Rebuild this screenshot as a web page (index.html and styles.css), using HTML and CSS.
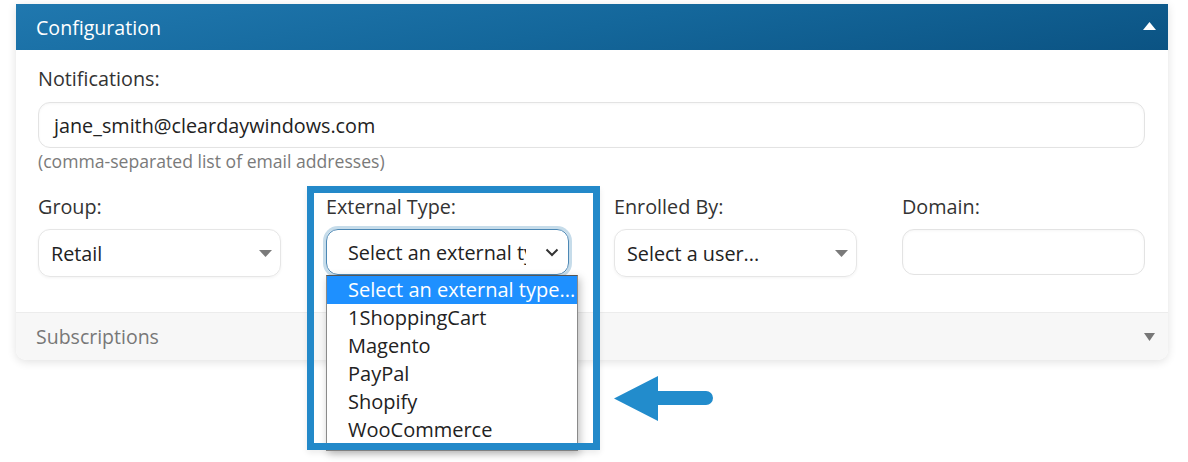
FILE: index.html
```html
<!DOCTYPE html>
<html lang="en">
<head>
  <meta charset="UTF-8" />
  <title>Configuration</title>
  <link rel="stylesheet" href="styles.css">
</head>
<body>
  <div class="panel">
    <div class="panel-head">
      <span>Configuration</span>
      <svg class="caret-up" width="13" height="8" viewBox="0 0 13 8"><polygon points="0,8 6.5,0 13,8" fill="#fff"/></svg>
    </div>

    <div class="panel-body">
      <label class="field-label">Notifications:</label>
      <div class="text-input">jane_smith@cleardaywindows.com</div>
      <div class="hint">(comma-separated list of email addresses)</div>

      <div class="field-row">
        <div class="field">
          <label class="field-label">Group:</label>
          <div class="select-box">
            <span class="select-text">Retail</span>
            <svg width="13" height="7" viewBox="0 0 13 7"><polygon points="0,0 13,0 6.5,7" fill="#7a7a7a"/></svg>
          </div>
        </div>

        <div class="field">
          <label class="field-label">External Type:</label>
          <div class="native-select">
            <span class="select-text">Select an external type...</span>
            <svg width="14" height="9" viewBox="0 0 14 9"><polyline points="1.5,1.5 7,7 12.5,1.5" fill="none" stroke="#333" stroke-width="2"/></svg>
            <ul class="options">
              <li class="active">Select an external type...</li>
              <li>1ShoppingCart</li>
              <li>Magento</li>
              <li>PayPal</li>
              <li>Shopify</li>
              <li>WooCommerce</li>
            </ul>
          </div>
        </div>

        <div class="field">
          <label class="field-label">Enrolled By:</label>
          <div class="select-box">
            <span class="select-text">Select a user...</span>
            <svg width="13" height="7" viewBox="0 0 13 7"><polygon points="0,0 13,0 6.5,7" fill="#7a7a7a"/></svg>
          </div>
        </div>

        <div class="field">
          <label class="field-label">Domain:</label>
          <div class="text-input"></div>
        </div>
      </div>
    </div>

    <div class="panel-foot">
      <span>Subscriptions</span>
      <svg width="11" height="8" viewBox="0 0 11 8"><polygon points="0,0 11,0 5.5,8" fill="#777"/></svg>
    </div>
  </div>

  <div class="highlight-frame"></div>
  <svg class="pointer" width="100" height="46" viewBox="0 0 100 46">
    <path d="M0,22.5 L44,0 L44,15 L92,15 A7,7 0 0 1 92,29 L44,29 L44,45 Z" fill="#228ccc"/>
  </svg>
</body>
</html>
```

FILE: styles.css
```css
html {
  background: #fff;
}

body {
  font-family: 'Open Sans', sans-serif;
  background: #fff;
  margin: 0;
  padding: 4px 20px 0 16px;
  min-height: 462px;
  box-sizing: border-box;
  position: relative;
  color: #333;
}

.panel {
  width: 1152px;
  border-radius: 0 0 10px 10px;
  box-shadow: 0 2px 10px rgba(0,0,0,0.12);
  background: #fff;
}

.panel-head {
  height: 46px;
  padding: 0 12px 0 20px;
  display: flex;
  align-items: center;
  justify-content: space-between;
  background: linear-gradient(170deg, #2078af 0%, #14679b 50%, #0b5383 100%);
  color: #fff;
  font-size: 19.6px;
}

.caret-up {
  margin-top: -2px;
}

.panel-body {
  padding: 16px 23px 35px 22px;
}

.field-label {
  display: block;
  font-size: 19.8px;
  line-height: 26px;
  margin-bottom: 10px;
  color: #333;
}

.text-input {
  height: 46px;
  box-sizing: border-box;
  border: 1px solid #e3e3e3;
  border-radius: 12px;
  padding: 0 15px;
  display: flex;
  align-items: center;
  font-size: 19.8px;
  color: #222;
  box-shadow: inset 0 1px 3px rgba(0,0,0,0.04);
}

.hint {
  font-size: 17.6px;
  line-height: 22px;
  margin-top: 2px;
  color: #7a7a7a;
}

.field-row {
  display: grid;
  grid-template-columns: repeat(4, 243px);
  column-gap: 45px;
  margin-top: 22px;
}

.field .field-label {
  margin-bottom: 9px;
}

.select-box {
  height: 48px;
  box-sizing: border-box;
  border: 1px solid #e6e6e6;
  border-radius: 12px;
  padding: 0 8px 0 12px;
  display: flex;
  align-items: center;
  justify-content: space-between;
  font-size: 19.8px;
  color: #222;
  box-shadow: 0 1px 3px rgba(0,0,0,0.05);
}

.native-select {
  position: relative;
  height: 46px;
  box-sizing: border-box;
  border: 1px solid #4d88b5;
  border-radius: 12px;
  padding: 0 9px 0 21px;
  display: flex;
  align-items: center;
  justify-content: space-between;
  font-size: 19.8px;
  color: #222;
  box-shadow: 0 0 0 3px #c6dcea;
}

.native-select .select-text {
  width: 178px;
  overflow: hidden;
  white-space: nowrap;
}

.options {
  position: absolute;
  left: -1px;
  top: 45px;
  width: 252px;
  height: 176px;
  margin: 0;
  padding: 0;
  list-style: none;
  box-sizing: border-box;
  background: #fff;
  border: 1px solid #8a8a8a;
  border-top-color: #555;
  box-shadow: 2px 3px 8px rgba(0,0,0,0.25);
  overflow: hidden;
  z-index: 2;
}

.options li {
  height: 28px;
  line-height: 28px;
  padding-left: 21px;
  font-size: 20px;
  color: #222;
  white-space: nowrap;
}

.options li.active {
  background: #1e90ff;
  color: #fff;
}

.panel-foot {
  height: 48px;
  box-sizing: border-box;
  border-top: 1px solid #ececec;
  background: #f7f7f7;
  border-radius: 0 0 10px 10px;
  padding: 0 13px 0 20px;
  display: flex;
  align-items: center;
  justify-content: space-between;
  font-size: 19.5px;
  color: #777;
}

.highlight-frame {
  position: absolute;
  left: 307px;
  top: 186px;
  width: 293px;
  height: 264px;
  box-sizing: border-box;
  border: 7px solid #2389c9;
  box-shadow: 0 3px 6px rgba(0,0,0,0.08);
  z-index: 3;
}

.pointer {
  position: absolute;
  left: 614px;
  top: 376px;
}
```
